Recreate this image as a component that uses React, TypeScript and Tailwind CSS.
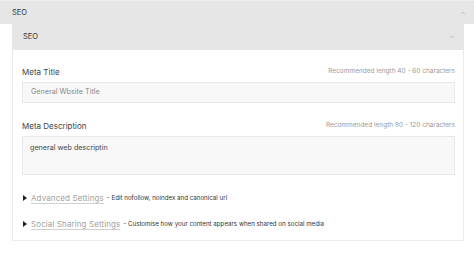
import { ChevronUp } from "lucide-react";

function Disclosure({ title, desc }: { title: string; desc: string }) {
  return (
    <div className="flex items-center h-[12px]">
      <span className="w-0 h-0 border-y-[3px] border-y-transparent border-l-[4px] border-l-[#222] ml-[1px] mr-[4px]" />
      <span className="text-[8px] text-[#a3a3a3] underline decoration-[#cfcfcf] underline-offset-2 tracking-[0.1px]">
        {title}
      </span>
      <span className="text-[6.2px] text-[#333] ml-[3px]">- {desc}</span>
    </div>
  );
}

export default function App() {
  return (
    <div className="w-[474px] h-[258px] bg-white font-['Inter',sans-serif] text-[#333] overflow-hidden">
      {/* outer header */}
      <div className="h-[24px] bg-[#e6e6e6] flex items-center justify-between pl-[12px] pr-[7px] border-t border-[#ececec]">
        <span className="text-[7.5px]">SEO</span>
        <ChevronUp className="w-[8px] h-[8px] text-[#b5b5b5]" strokeWidth={2} />
      </div>

      <div className="pl-[12px] pr-[10px]">
        {/* inner header */}
        <div className="h-[26px] bg-[#e6e6e6] flex items-center justify-between pl-[11px] pr-[8px]">
          <span className="text-[7.5px]">SEO</span>
          <ChevronUp className="w-[8px] h-[8px] text-[#b5b5b5]" strokeWidth={2} />
        </div>

        {/* body */}
        <div className="border border-t-0 border-[#ececec] pl-[9px] pr-[8px] pt-[16px] pb-[10px]">
          <div className="flex items-center justify-between h-[12px]">
            <span className="text-[8px] text-[#444]">Meta Title</span>
            <span className="text-[6.5px] text-[#9a9a9a]">Recommended length 40 - 60 characters</span>
          </div>
          <div className="mt-[4px] h-[21px] bg-[#f8f8f8] border border-[#e8e8e8] flex items-center px-[8px]">
            <span className="text-[7.2px] text-[#8a8a8a]">General Wbsite Title</span>
          </div>

          <div className="mt-[17px] flex items-center justify-between h-[12px]">
            <span className="text-[8px] text-[#444]">Meta Description</span>
            <span className="text-[6.5px] text-[#9a9a9a]">Recommended length 80 - 120 characters</span>
          </div>
          <div className="mt-[4px] h-[39px] bg-[#f8f8f8] border border-[#e8e8e8] px-[7px] pt-[6px] text-[7.2px] leading-[10px] text-[#444]">
            general web descriptin
          </div>

          <div className="mt-[17px]">
            <Disclosure title="Advanced Settings" desc="Edit nofollow, noindex and canonical url" />
          </div>
          <div className="mt-[14px]">
            <Disclosure
              title="Social Sharing Settings"
              desc="Customise how your content appears when shared on social media"
            />
          </div>
        </div>
      </div>
    </div>
  );
}
